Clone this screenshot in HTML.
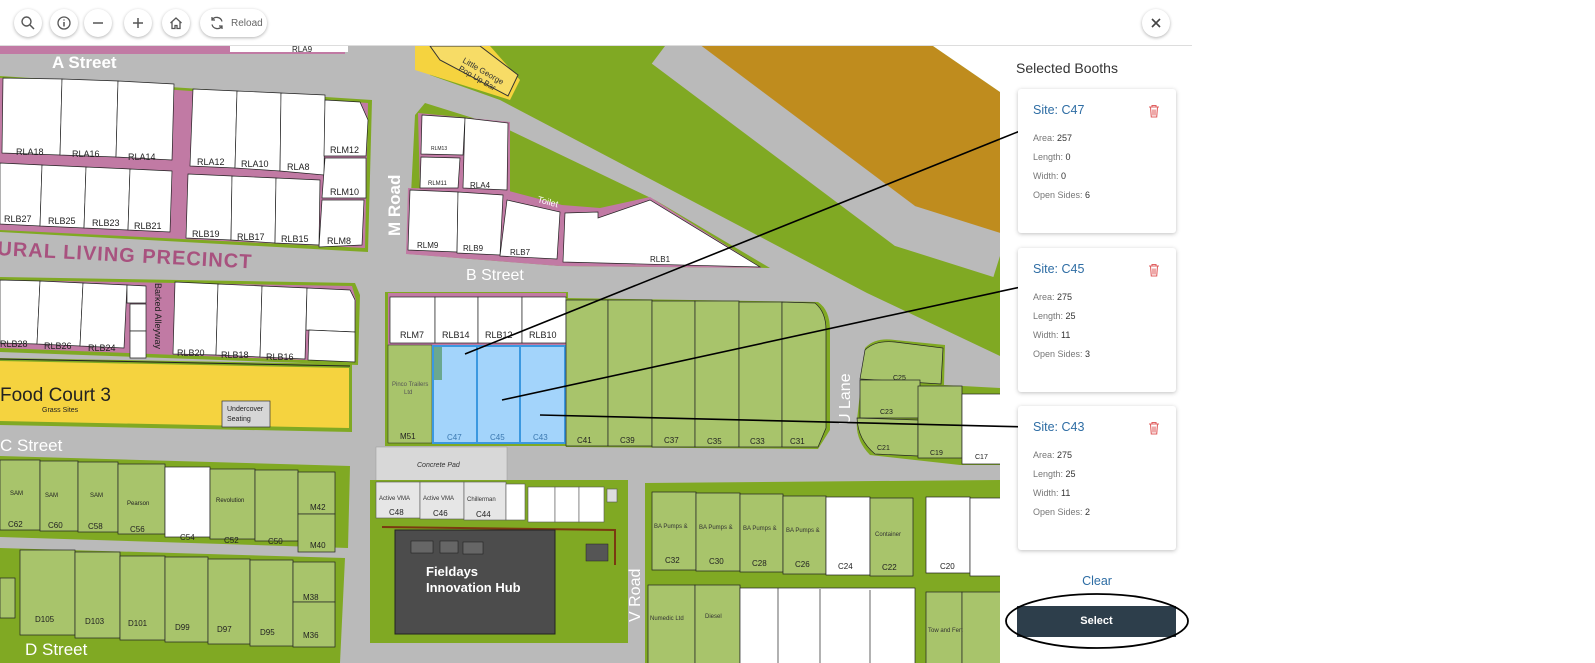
<!DOCTYPE html><html><head><meta charset="utf-8"><style>
*{margin:0;padding:0;box-sizing:border-box}
body{width:1595px;height:663px;background:#fff;font-family:"Liberation Sans",sans-serif;position:relative;overflow:hidden}
.tb{position:absolute;left:0;top:0;width:1192px;height:46px;background:#fff;border-bottom:1px solid #ddd;z-index:3}
.cb{position:absolute;top:9px;width:28px;height:28px;border-radius:14px;background:#fff;box-shadow:0 1px 3px rgba(0,0,0,.3);display:flex;align-items:center;justify-content:center}
.map{position:absolute;left:0;top:46px}
.panel{position:absolute;left:1000px;top:46px;width:192px;height:617px;background:#fff}
.card{position:absolute;left:18px;width:158px;height:144px;background:#fff;box-shadow:0 1px 4px rgba(0,0,0,.25);border-radius:3px}
.card h4{position:absolute;left:15px;top:14px;font-weight:normal;font-size:12.5px;color:#2e6da4}
.card p{position:absolute;left:15px;font-size:9px;color:#777}
.card p b{color:#333;font-weight:normal}
.tr{position:absolute;left:130px;top:15px}
</style></head><body>
<div class="tb">
<div class="cb" style="left:14px"><svg width="16" height="16" viewBox="0 0 16 16"><circle cx="6.5" cy="6.5" r="4.5" fill="none" stroke="#555" stroke-width="1.4"/><path d="M10 10l4 4" stroke="#555" stroke-width="1.5"/></svg></div>
<div class="cb" style="left:50px"><svg width="16" height="16" viewBox="0 0 16 16"><circle cx="8" cy="8" r="6" fill="none" stroke="#555" stroke-width="1.3"/><path d="M8 7v4.5M8 4.5v1" stroke="#555" stroke-width="1.5"/></svg></div>
<div class="cb" style="left:84px"><svg width="16" height="16"><path d="M3 8h10" stroke="#555" stroke-width="1.5"/></svg></div>
<div class="cb" style="left:124px"><svg width="16" height="16"><path d="M3 8h10M8 3v10" stroke="#555" stroke-width="1.5"/></svg></div>
<div class="cb" style="left:162px"><svg width="16" height="16"><path d="M2.5 8L8 3l5.5 5M4 7v6.5h3v-3h2v3h3V7" fill="none" stroke="#555" stroke-width="1.3"/></svg></div>
<div class="cb" style="left:200px;width:67px;justify-content:flex-start;padding-left:9px;font-size:10px;color:#666"><svg width="16" height="16" viewBox="0 0 16 16"><path d="M13 6.5A5.5 5.5 0 0 0 3 5M3 9.5A5.5 5.5 0 0 0 13 11M3 2v3h3M13 14v-3h-3" fill="none" stroke="#555" stroke-width="1.3"/></svg><span style="margin-left:6px">Reload</span></div>
<div class="cb" style="left:1142px"><svg width="14" height="14"><path d="M3 3l8 8M11 3l-8 8" stroke="#444" stroke-width="1.6"/></svg></div>
</div>
<svg class="map" width="1000" height="617" viewBox="0 46 1000 617" font-family="Liberation Sans,sans-serif">
<rect x="0" y="46" width="1000" height="617" fill="#bababa"/>
<polygon points="430,46 1000,46 1000,356 867,293 500,100 430,75" fill="#80a923"/>
<polygon points="690,46 933,46 1000,92 1000,250 915,228" fill="#bf8c1e"/>
<polygon points="933,46 1000,46 1000,92" fill="#fff"/>
<polyline points="665,46 905,226 1000,256" fill="none" stroke="#bababa" stroke-width="44"/>
<polygon points="415,46 490,46 520,80 510,100 415,70" fill="#f5d33f"/>
<polygon points="430,46 480,46 518,75 508,96 440,60" fill="#f7dc66" stroke="#333" stroke-width="1"/>
<text x="462" y="62" font-size="8" fill="#333" transform="rotate(30 462 62)">Little George</text>
<text x="458" y="70" font-size="8" fill="#333" transform="rotate(30 458 70)">Pop Up Bar</text>
<rect x="0" y="46" width="345" height="8" fill="#c17aa4"/>
<rect x="230" y="46" width="118" height="6" fill="#fff"/>
<text x="292" y="52" font-size="8" fill="#222">RLA9</text>
<text x="52" y="68" font-size="17" font-weight="bold" fill="#fff">A Street</text>
<polygon points="0,76 372,100 368,252 0,232" fill="#80a923"/>
<polygon points="0,78 368,103 365,248 0,230" fill="#c17aa4"/>
<g fill="#fff" stroke="#222" stroke-width=".7">
<polygon points="3,78 62,79 60,155 2,153"/><polygon points="62,79 118,81 116,157 60,155"/><polygon points="118,81 174,84 172,160 116,157"/>
<polygon points="0,163 42,165 40,226 0,224"/><polygon points="42,165 86,167 84,228 40,226"/><polygon points="86,167 130,169 128,230 84,228"/><polygon points="130,169 172,171 170,232 128,230"/>
<polygon points="193,89 237,91 235,168 190,166"/><polygon points="237,91 281,93 280,171 235,168"/><polygon points="281,93 325,95 324,175 280,171"/>
<polygon points="325,100 360,102 368,120 366,156 324,156"/><polygon points="325,158 366,158 366,198 322,198"/>
<polygon points="188,174 232,176 231,240 186,238"/><polygon points="232,176 276,178 275,243 231,240"/><polygon points="276,178 320,180 319,245 275,243"/><polygon points="322,200 364,200 362,245 319,247"/>
</g>
<g font-size="9" fill="#222">
<text x="16" y="155">RLA18</text><text x="72" y="157">RLA16</text><text x="128" y="160">RLA14</text>
<text x="4" y="222">RLB27</text><text x="48" y="224">RLB25</text><text x="92" y="226">RLB23</text><text x="134" y="229">RLB21</text>
<text x="197" y="165">RLA12</text><text x="241" y="167">RLA10</text><text x="287" y="170">RLA8</text><text x="330" y="153">RLM12</text><text x="330" y="195">RLM10</text>
<text x="192" y="237">RLB19</text><text x="237" y="240">RLB17</text><text x="281" y="242">RLB15</text><text x="327" y="244">RLM8</text>
</g>
<text x="-3" y="262" font-size="20" font-weight="bold" fill="#a8527f" transform="rotate(3 130 262)" letter-spacing="1">URAL LIVING PRECINCT</text>
<text x="400" y="236" font-size="17" font-weight="bold" fill="#fff" transform="rotate(-90 400 236)">M Road</text>
<polygon points="0,277 355,283 360,295 358,365 0,352" fill="#80a923"/>
<polygon points="0,280 352,286 356,300 354,362 0,348" fill="#c17aa4"/>
<g fill="#fff" stroke="#222" stroke-width=".7">
<polygon points="0,280 40,281 37,344 0,343"/><polygon points="40,281 83,283 80,346 37,344"/><polygon points="83,283 127,285 124,348 80,346"/>
<polygon points="127,285 146,286 146,303 127,303"/><polygon points="130,304 146,304 146,331 130,331"/><polygon points="130,331 146,331 146,358 130,358"/>
<polygon points="175,282 218,284 216,355 173,354"/><polygon points="218,284 262,286 260,357 216,355"/><polygon points="262,286 307,288 305,359 260,357"/>
<polygon points="307,288 350,290 355,300 355,332 306,330"/><polygon points="309,330 355,332 355,362 308,360"/>
</g>
<g font-size="9" fill="#222"><text x="0" y="347">RLB28</text><text x="44" y="349">RLB26</text><text x="88" y="351">RLB24</text><text x="177" y="356">RLB20</text><text x="221" y="358">RLB18</text><text x="266" y="360">RLB16</text></g>
<text x="155" y="283" font-size="9" fill="#222" transform="rotate(90 155 283)">Barked Alleyway</text>
<polygon points="0,358 352,364 352,432 0,425" fill="#80a923"/>
<polygon points="0,361 349,368 349,428 0,421" fill="#f5d33f"/>
<line x1="0" y1="359" x2="350" y2="366" stroke="#222" stroke-width="1"/>
<text x="0" y="401" font-size="19" fill="#222">Food Court 3</text>
<text x="42" y="412" font-size="7" fill="#222">Grass Sites</text>
<rect x="222" y="401" width="48" height="26" fill="#d6d6d6" stroke="#333" stroke-width=".7"/>
<text x="227" y="411" font-size="7" fill="#222">Undercover</text><text x="227" y="421" font-size="7" fill="#222">Seating</text>
<text x="0" y="451" font-size="17" fill="#fff">C Street</text>
<polygon points="0,456 350,466 348,548 0,537" fill="#80a923"/>
<g fill="#a8c46b" stroke="#222" stroke-width=".7">
<rect x="0" y="460" width="40" height="70"/><rect x="40" y="461" width="38" height="70"/><rect x="78" y="462" width="40" height="70"/><rect x="118" y="464" width="47" height="70"/>
<rect x="165" y="467" width="45" height="70" fill="#fff"/><rect x="210" y="469" width="45" height="70"/><rect x="255" y="470" width="43" height="71"/><rect x="298" y="472" width="37" height="42"/><rect x="298" y="514" width="37" height="38"/>
</g>
<g font-size="8" fill="#222"><text x="8" y="527">C62</text><text x="48" y="528">C60</text><text x="88" y="529">C58</text><text x="130" y="532">C56</text><text x="180" y="540">C54</text><text x="224" y="543">C52</text><text x="268" y="544">C50</text><text x="310" y="510">M42</text><text x="310" y="548">M40</text>
<g font-size="6"><text x="10" y="495">SAM</text><text x="45" y="497">SAM</text><text x="90" y="497">SAM</text><text x="127" y="505">Pearson</text><text x="216" y="502">Revolution</text></g></g>
<polygon points="0,548 345,558 340,663 0,663" fill="#80a923"/>
<g fill="#a8c46b" stroke="#222" stroke-width=".7">
<rect x="0" y="578" width="15" height="40"/><rect x="20" y="550" width="55" height="85"/><rect x="75" y="552" width="45" height="86"/><rect x="120" y="556" width="45" height="84"/><rect x="165" y="557" width="43" height="85"/><rect x="208" y="559" width="42" height="85"/><rect x="250" y="560" width="43" height="86"/><rect x="293" y="562" width="42" height="40"/><rect x="293" y="602" width="42" height="45"/>
</g>
<g font-size="8" fill="#222"><text x="35" y="622">D105</text><text x="85" y="624">D103</text><text x="128" y="626">D101</text><text x="175" y="630">D99</text><text x="217" y="632">D97</text><text x="260" y="635">D95</text><text x="303" y="600">M38</text><text x="303" y="638">M36</text></g>
<text x="25" y="655" font-size="17" fill="#fff">D Street</text>
<polygon points="425,103 505,128 655,200 770,268 560,266 408,254 415,115" fill="#80a923"/>
<g fill="#c17aa4">
<polygon points="418,113 510,122 510,192 420,192"/>
<polygon points="505,190 562,205 600,208 650,197 762,268 560,266 406,254 408,188"/>
</g>
<g fill="#fff" stroke="#222" stroke-width=".7">
<polygon points="422,115 465,118 463,155 421,154"/><polygon points="421,157 460,158 458,188 420,188"/><polygon points="465,118 508,123 507,190 463,188"/>
<polygon points="410,190 458,192 457,252 408,250"/><polygon points="458,192 503,195 500,255 457,253"/><polygon points="507,200 560,212 557,259 500,256"/>
<polygon points="565,213 598,212 598,218 650,200 760,267 563,262"/>
</g>
<g font-size="8" fill="#222"><text x="431" y="150" font-size="5">RLM13</text><text x="428" y="185" font-size="6">RLM11</text><text x="470" y="188">RLA4</text><text x="417" y="248">RLM9</text><text x="463" y="251">RLB9</text><text x="510" y="255">RLB7</text><text x="650" y="262">RLB1</text></g>
<text x="537" y="202" font-size="9" fill="#fff" transform="rotate(15 537 202)">Toilet</text>
<text x="466" y="280" font-size="16" fill="#fff">B Street</text>
<rect x="385" y="292" width="183" height="154" fill="#80a923"/>
<rect x="388" y="293" width="178" height="52" fill="#c17aa4"/>
<g fill="#fff" stroke="#222" stroke-width=".7"><rect x="390" y="297" width="45" height="46"/><rect x="435" y="297" width="43" height="46"/><rect x="478" y="297" width="44" height="46"/><rect x="522" y="297" width="44" height="46"/></g>
<g font-size="9" fill="#222"><text x="400" y="338">RLM7</text><text x="442" y="338">RLB14</text><text x="485" y="338">RLB12</text><text x="529" y="338">RLB10</text></g>
<rect x="388" y="345" width="44" height="98" fill="#a8c46b" stroke="#222" stroke-width=".5"/>
<text x="392" y="386" font-size="6" fill="#555">Pinco Trailers</text><text x="404" y="394" font-size="6" fill="#555">Ltd</text>
<text x="400" y="439" font-size="8" fill="#222">M51</text>
<g fill="#a3d4fb" stroke="#3b98e0" stroke-width="2"><rect x="433" y="346" width="44" height="97"/><rect x="477" y="346" width="43" height="97"/><rect x="520" y="346" width="45" height="97"/></g>
<rect x="434" y="347" width="8" height="33" fill="#6aa88f"/>
<g font-size="8" fill="#3b78b0"><text x="447" y="440">C47</text><text x="490" y="440">C45</text><text x="533" y="440">C43</text></g>
<path d="M566,298 L818,302 Q830,310 830,330 L830,430 L818,449 L566,447Z" fill="#80a923"/>
<g fill="#a8c46b" stroke="#222" stroke-width=".7">
<rect x="566" y="300" width="42" height="146"/><rect x="608" y="300" width="44" height="146"/><rect x="652" y="301" width="43" height="146"/><rect x="695" y="301" width="44" height="146"/><rect x="739" y="302" width="43" height="145"/><path d="M782,302 L815,303 Q826,312 826,330 L826,428 L818,447 L782,447Z"/>
</g>
<g font-size="8" fill="#222"><text x="577" y="443">C41</text><text x="620" y="443">C39</text><text x="664" y="443">C37</text><text x="707" y="444">C35</text><text x="750" y="444">C33</text><text x="790" y="444">C31</text></g>
<text x="850" y="425" font-size="16" fill="#fff" transform="rotate(-90 850 425)">U Lane</text>
<path d="M865,348 Q875,337 895,340 L945,345 L944,385 L1000,388 L1000,465 L960,465 L870,455 Q855,440 857,420 Z" fill="#80a923"/>
<g fill="#a8c46b" stroke="#222" stroke-width=".7">
<path d="M865,350 Q875,340 895,342 L943,348 L941,384 L860,379Z"/><rect x="860" y="380" width="60" height="38"/><path d="M857,418 L918,420 L918,456 L875,454 Q858,440 857,418Z"/><rect x="918" y="386" width="44" height="72"/><rect x="962" y="394" width="40" height="70" fill="#fff"/>
</g>
<g font-size="7" fill="#222"><text x="893" y="380">C25</text><text x="880" y="414">C23</text><text x="877" y="450">C21</text><text x="930" y="455">C19</text><text x="975" y="459">C17</text></g>
<rect x="376" y="447" width="131" height="34" fill="#d8d8d8" stroke="#999" stroke-width=".5"/>
<text x="417" y="467" font-size="7" fill="#333" font-style="italic">Concrete Pad</text>
<rect x="370" y="480" width="258" height="163" fill="#80a923"/>
<g stroke="#555" stroke-width=".6"><rect x="376" y="482" width="44" height="36" fill="#e6e6e6"/><rect x="420" y="482" width="44" height="37" fill="#e6e6e6"/><rect x="464" y="482" width="42" height="38" fill="#e6e6e6"/><rect x="506" y="484" width="19" height="36" fill="#fff"/><rect x="528" y="487" width="27" height="35" fill="#fff"/><rect x="555" y="487" width="24" height="35" fill="#fff"/><rect x="579" y="487" width="25" height="35" fill="#fff"/><rect x="607" y="489" width="10" height="13" fill="#ddd"/></g>
<g font-size="6" fill="#333"><text x="379" y="500">Active VMA</text><text x="423" y="500">Active VMA</text><text x="467" y="501">Chillerman</text></g>
<g font-size="8" fill="#222"><text x="389" y="515">C48</text><text x="433" y="516">C46</text><text x="476" y="517">C44</text></g>
<path d="M382,527 L615,530 L615,565" fill="none" stroke="#7a3a10" stroke-width="2"/>
<rect x="395" y="530" width="160" height="104" fill="#4c4c4c" stroke="#222"/>
<g fill="#666" stroke="#222" stroke-width=".6"><rect x="411" y="541" width="22" height="12"/><rect x="440" y="541" width="18" height="12"/><rect x="463" y="542" width="20" height="12"/></g>
<rect x="586" y="544" width="22" height="17" fill="#555" stroke="#222" stroke-width=".5"/>
<text x="426" y="576" font-size="13" font-weight="bold" fill="#fff">Fieldays</text>
<text x="426" y="592" font-size="13" font-weight="bold" fill="#fff">Innovation Hub</text>
<text x="640" y="622" font-size="16" fill="#fff" transform="rotate(-90 640 622)">V Road</text>
<polygon points="645,483 1000,480 1000,663 645,663" fill="#80a923"/>
<g fill="#a8c46b" stroke="#222" stroke-width=".7">
<rect x="652" y="492" width="44" height="78"/><rect x="696" y="493" width="44" height="78"/><rect x="740" y="494" width="43" height="78"/><rect x="783" y="496" width="43" height="78"/><rect x="826" y="497" width="44" height="78" fill="#fff"/><rect x="870" y="498" width="43" height="78"/><rect x="926" y="497" width="44" height="76" fill="#fff"/><rect x="970" y="498" width="32" height="78" fill="#fff"/>
<rect x="648" y="585" width="47" height="80"/><rect x="695" y="585" width="45" height="80"/><rect x="740" y="588" width="175" height="80" fill="#fff"/><rect x="926" y="592" width="36" height="75"/><rect x="962" y="592" width="40" height="75"/>
</g>
<line x1="778" y1="588" x2="778" y2="663" stroke="#222" stroke-width=".7"/><line x1="820" y1="589" x2="820" y2="663" stroke="#222" stroke-width=".7"/><line x1="870" y1="590" x2="870" y2="663" stroke="#222" stroke-width=".7"/>
<g font-size="6" fill="#333"><text x="654" y="528">BA Pumps &amp;</text><text x="699" y="529">BA Pumps &amp;</text><text x="743" y="530">BA Pumps &amp;</text><text x="786" y="532">BA Pumps &amp;</text><text x="875" y="536">Container</text><text x="650" y="620">Numedic Ltd</text><text x="705" y="618">Diesel</text><text x="928" y="632">Tow and Fert</text></g>
<g font-size="8" fill="#222"><text x="665" y="563">C32</text><text x="709" y="564">C30</text><text x="752" y="566">C28</text><text x="795" y="567">C26</text><text x="838" y="569">C24</text><text x="882" y="570">C22</text><text x="940" y="569">C20</text></g>
<g stroke="#000" stroke-width="1.6"><line x1="465" y1="354" x2="1000" y2="139"/><line x1="502" y1="400" x2="1000" y2="291.5"/><line x1="540" y1="415" x2="1000" y2="426.3"/></g>
</svg>
<div class="panel">
<svg style="position:absolute;left:0;top:0" width="192" height="617"><g stroke="#000" stroke-width="1.6"><line x1="0" y1="93" x2="30" y2="81"/><line x1="0" y1="245.5" x2="30" y2="239"/><line x1="0" y1="380.3" x2="30" y2="381"/></g></svg>
<div style="position:absolute;left:16px;top:14px;font-size:14px;color:#333">Selected Booths</div>
<div class="card" style="top:43px"><h4>Site: C47</h4><svg class="tr" width="12" height="14" viewBox="0 0 12 14"><path d="M1 3h10M4 3V1.5h4V3M2.5 3.5l.8 9.5h5.4l.8-9.5M5 5.5v6M7 5.5v6" fill="none" stroke="#e06060" stroke-width="1.1"/></svg><p style="top:44px">Area: <b>257</b></p><p style="top:63px">Length: <b>0</b></p><p style="top:82px">Width: <b>0</b></p><p style="top:101px">Open Sides: <b>6</b></p></div>
<div class="card" style="top:202px"><h4>Site: C45</h4><svg class="tr" width="12" height="14" viewBox="0 0 12 14"><path d="M1 3h10M4 3V1.5h4V3M2.5 3.5l.8 9.5h5.4l.8-9.5M5 5.5v6M7 5.5v6" fill="none" stroke="#e06060" stroke-width="1.1"/></svg><p style="top:44px">Area: <b>275</b></p><p style="top:63px">Length: <b>25</b></p><p style="top:82px">Width: <b>11</b></p><p style="top:101px">Open Sides: <b>3</b></p></div>
<div class="card" style="top:360px"><h4>Site: C43</h4><svg class="tr" width="12" height="14" viewBox="0 0 12 14"><path d="M1 3h10M4 3V1.5h4V3M2.5 3.5l.8 9.5h5.4l.8-9.5M5 5.5v6M7 5.5v6" fill="none" stroke="#e06060" stroke-width="1.1"/></svg><p style="top:44px">Area: <b>275</b></p><p style="top:63px">Length: <b>25</b></p><p style="top:82px">Width: <b>11</b></p><p style="top:101px">Open Sides: <b>2</b></p></div>
<div style="position:absolute;left:0;width:192px;top:528px;text-align:center;font-size:12.5px;color:#2e6da4;padding-left:2px">Clear</div>
<div style="position:absolute;left:17px;top:560px;width:159px;height:31px;background:#2d3e4b;color:#fff;font-size:11px;font-weight:bold;text-align:center;line-height:31px">Select</div>
<svg style="position:absolute;left:0;top:545px" width="195" height="62"><ellipse cx="97" cy="30" rx="91" ry="27" fill="none" stroke="#000" stroke-width="1.8"/></svg>
</div>
</body></html>
